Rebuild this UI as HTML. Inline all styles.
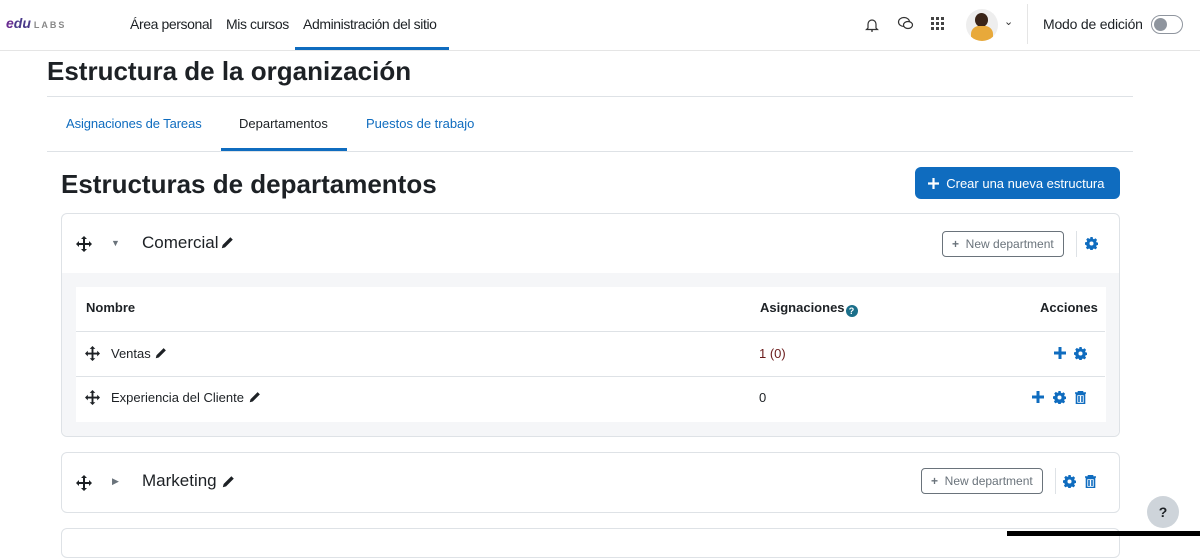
<!DOCTYPE html>
<html><head><meta charset="utf-8"><style>
*{box-sizing:border-box;margin:0;padding:0}
body{width:1200px;height:536px;overflow:hidden;background:#fff;font-family:"Liberation Sans",sans-serif;color:#1d2125;position:relative}
.a{position:absolute;white-space:nowrap}
.nav{position:absolute;left:0;top:0;width:1200px;height:51px;border-bottom:1px solid #e5e5e5;background:#fff}
.blue{color:#0f6cbf}
.card{position:absolute;left:61px;width:1059px;border:1px solid #dee2e6;border-radius:6px;background:#fff}
.nd{position:absolute;height:26px;border:1px solid #6a737b;border-radius:4px;font-size:12px;color:#6a737b;padding:5px 9px;white-space:nowrap}
.row{position:absolute;left:0;width:1029px;border-top:1px solid #dee2e6;height:45px}
svg{display:block}
</style></head><body>
<svg width="0" height="0" style="position:absolute"><defs>
<symbol id="gear" viewBox="0 0 16 16"><path fill="#0f6cbf" fill-rule="evenodd" d="M6.6 0h2.8l.4 2.1 1.3.6 1.8-1.2 2 2-1.2 1.8.6 1.3 2.1.4v2.8l-2.1.4-.6 1.3 1.2 1.8-2 2-1.8-1.2-1.3.6-.4 2.1H6.6l-.4-2.1-1.3-.6-1.8 1.2-2-2 1.2-1.8-.6-1.3L0 9.4V6.6l2.1-.4.6-1.3-1.2-1.8 2-2 1.8 1.2 1.3-.6zM8 5.5a2.5 2.5 0 1 0 0 5 2.5 2.5 0 0 0 0-5z"/></symbol>
<symbol id="move" viewBox="0 0 16 16"><path fill="#1d2125" d="M8 0l3 3H9v4h4V5l3 3-3 3V9H9v4h2l-3 3-3-3h2V9H3v2L0 8l3-3v2h4V3H5z"/></symbol>
<symbol id="pen" viewBox="0 0 16 16"><path fill="#1d2125" d="M11.5 1.5l3 3L5 14l-4 1 1-4zM10 3l3 3"/></symbol>
<symbol id="trash" viewBox="0 0 11 13"><path d="M0 2h11M3.5 2V0.5h4V2M1.5 3.5h8v9h-8z M4 5v6M7 5v6" fill="none" stroke="#0f6cbf" stroke-width="1.6"/></symbol>
<symbol id="plus" viewBox="0 0 12 12"><path d="M6 0v12M0 6h12" stroke="#0f6cbf" stroke-width="3"/></symbol>
</defs></svg>
<div class="nav">
 <div class="a" style="left:6px;top:15px;font-size:14px;font-weight:bold;font-style:italic;color:#6a2c91">e<span style="color:#4a3a8a">du</span><span style="font-size:9px;color:#888;font-style:normal;letter-spacing:2px;margin-left:3px">LABS</span></div>
 <div class="a" style="left:130px;top:16px;font-size:14px;letter-spacing:-0.4px">Área personal</div>
 <div class="a" style="left:226px;top:16px;font-size:14px;letter-spacing:-0.4px">Mis cursos</div>
 <div class="a" style="left:303px;top:16px;font-size:14px;letter-spacing:-0.4px">Administración del sitio</div>
 <div class="a" style="left:295px;top:47px;width:154px;height:3px;background:#0f6cbf"></div>
 <svg class="a" style="left:865px;top:17px" width="14" height="16" viewBox="0 0 14 16"><path d="M3 11V7a4 4 0 0 1 8 0v4l1.5 1.5h-11z M6 14h2" fill="none" stroke="#333" stroke-width="1.2"/></svg>
 <svg class="a" style="left:897px;top:16px" width="17" height="16" viewBox="0 0 17 16"><ellipse cx="7" cy="6" rx="5.5" ry="4.5" fill="none" stroke="#333" stroke-width="1.2"/><ellipse cx="11" cy="9" rx="4.5" ry="3.5" fill="#fff" stroke="#333" stroke-width="1.2"/></svg>
 <svg class="a" style="left:931px;top:17px" width="14" height="14"><g fill="#444"><rect x="0" y="0" width="3" height="3"/><rect x="5" y="0" width="3" height="3"/><rect x="10" y="0" width="3" height="3"/><rect x="0" y="5" width="3" height="3"/><rect x="5" y="5" width="3" height="3"/><rect x="10" y="5" width="3" height="3"/><rect x="0" y="10" width="3" height="3"/><rect x="5" y="10" width="3" height="3"/><rect x="10" y="10" width="3" height="3"/></g></svg>
 <div class="a" style="left:966px;top:9px;width:32px;height:32px;border-radius:50%;background:#eee;overflow:hidden"><div style="position:absolute;left:9px;top:4px;width:13px;height:14px;border-radius:50%;background:#3a2418"></div><div style="position:absolute;left:5px;top:17px;width:22px;height:16px;border-radius:8px 8px 0 0;background:#e8a93a"></div></div>
 <div class="a" style="left:1004px;top:15px;font-size:11px;color:#333">⌄</div>
 <div class="a" style="left:1027px;top:4px;width:1px;height:40px;background:#e5e5e5"></div>
 <div class="a" style="left:1043px;top:16px;font-size:14px;letter-spacing:-0.2px">Modo de edición</div>
 <div class="a" style="left:1151px;top:15px;width:32px;height:19px;border:1px solid #8f959e;border-radius:10px"><div style="position:absolute;left:2px;top:2px;width:13px;height:13px;border-radius:50%;background:#8f959e"></div></div>
</div>
<div class="a" style="left:47px;top:56px;font-size:26px;font-weight:bold">Estructura de la organización</div>
<div class="a" style="left:47px;top:96px;width:1086px;height:1px;background:#dee2e6"></div>
<div class="a blue" style="left:66px;top:116px;font-size:13px;letter-spacing:-0.1px">Asignaciones de Tareas</div>
<div class="a" style="left:239px;top:116px;font-size:13px">Departamentos</div>
<div class="a blue" style="left:366px;top:116px;font-size:13px">Puestos de trabajo</div>
<div class="a" style="left:47px;top:151px;width:1086px;height:1px;background:#dee2e6"></div>
<div class="a" style="left:221px;top:148px;width:126px;height:3px;background:#0f6cbf"></div>
<div class="a" style="left:61px;top:169px;font-size:26px;font-weight:bold">Estructuras de departamentos</div>
<div class="a" style="left:915px;top:167px;width:205px;height:32px;background:#0f6cbf;border-radius:6px;color:#fff;font-size:13px;padding:9px 0 0 13px"><svg style="display:inline-block;vertical-align:-1px" width="11" height="11" viewBox="0 0 12 12"><path d="M6 0v12M0 6h12" stroke="#fff" stroke-width="2.4"/></svg>&nbsp; Crear una nueva estructura</div>

<div class="card" style="top:213px;height:224px">
 <svg class="a" style="left:14px;top:22px" width="16" height="16"><use href="#move"/></svg>
 <div class="a" style="left:49px;top:24px;font-size:9px;color:#6a737b">▼</div>
 <div class="a" style="left:80px;top:19px;font-size:17px">Comercial</div>
 <svg class="a" style="left:159px;top:22px" width="13" height="13"><use href="#pen"/></svg>
 <div class="nd" style="left:880px;top:17px"><b>+</b>&nbsp; New department</div>
 <div class="a" style="left:1014px;top:17px;width:1px;height:26px;background:#dee2e6"></div>
 <svg class="a" style="left:1023px;top:23px" width="13" height="13"><use href="#gear"/></svg>
 <div class="a" style="left:0;top:59px;width:1057px;height:163px;background:#f5f6f8;border-radius:0 0 6px 6px"></div>
 <div class="a" style="left:14px;top:73px;width:1030px;height:135px;background:#fff">
  <div class="a" style="left:10px;top:13px;font-size:13px;font-weight:bold">Nombre</div>
  <div class="a" style="left:684px;top:13px;font-size:13px;font-weight:bold">Asignaciones<span style="display:inline-block;width:12px;height:12px;border-radius:50%;background:#1b6f8a;color:#fff;font-size:9px;text-align:center;line-height:12px;vertical-align:-2px;margin-left:1px">?</span></div>
  <div class="a" style="left:964px;top:13px;font-size:13px;font-weight:bold">Acciones</div>
  <div class="row" style="top:44px">
   <svg class="a" style="left:9px;top:14px" width="15" height="15"><use href="#move"/></svg>
   <div class="a" style="left:35px;top:14px;font-size:13px">Ventas</div>
   <svg class="a" style="left:79px;top:15px" width="12" height="12"><use href="#pen"/></svg>
   <div class="a" style="left:683px;top:14px;font-size:13px;color:#6a1b1b">1 (0)</div>
   <svg class="a" style="left:978px;top:15px" width="12" height="12"><use href="#plus"/></svg>
   <svg class="a" style="left:998px;top:15px" width="13" height="13"><use href="#gear"/></svg>
  </div>
  <div class="row" style="top:89px">
   <svg class="a" style="left:9px;top:13px" width="15" height="15"><use href="#move"/></svg>
   <div class="a" style="left:35px;top:13px;font-size:13px">Experiencia del Cliente</div>
   <svg class="a" style="left:173px;top:14px" width="12" height="12"><use href="#pen"/></svg>
   <div class="a" style="left:683px;top:13px;font-size:13px">0</div>
   <svg class="a" style="left:956px;top:14px" width="12" height="12"><use href="#plus"/></svg>
   <svg class="a" style="left:977px;top:14px" width="13" height="13"><use href="#gear"/></svg>
   <svg class="a" style="left:999px;top:14px" width="11" height="13"><use href="#trash"/></svg>
  </div>
 </div>
</div>

<div class="card" style="top:452px;height:61px">
 <svg class="a" style="left:14px;top:22px" width="16" height="16"><use href="#move"/></svg>
 <div class="a" style="left:50px;top:23px;font-size:9px;color:#6a737b">▶</div>
 <div class="a" style="left:80px;top:18px;font-size:17px">Marketing</div>
 <svg class="a" style="left:160px;top:22px" width="13" height="13"><use href="#pen"/></svg>
 <div class="nd" style="left:859px;top:15px"><b>+</b>&nbsp; New department</div>
 <div class="a" style="left:993px;top:15px;width:1px;height:26px;background:#dee2e6"></div>
 <svg class="a" style="left:1001px;top:22px" width="13" height="13"><use href="#gear"/></svg>
 <svg class="a" style="left:1023px;top:22px" width="11" height="13"><use href="#trash"/></svg>
</div>
<div class="card" style="top:528px;height:30px"></div>
<div class="a" style="left:1147px;top:496px;width:32px;height:32px;border-radius:50%;background:#ced4da;font-size:14px;font-weight:bold;text-align:center;line-height:32px">?</div>
<div class="a" style="left:1007px;top:531px;width:193px;height:5px;background:#000"></div>
</body></html>
